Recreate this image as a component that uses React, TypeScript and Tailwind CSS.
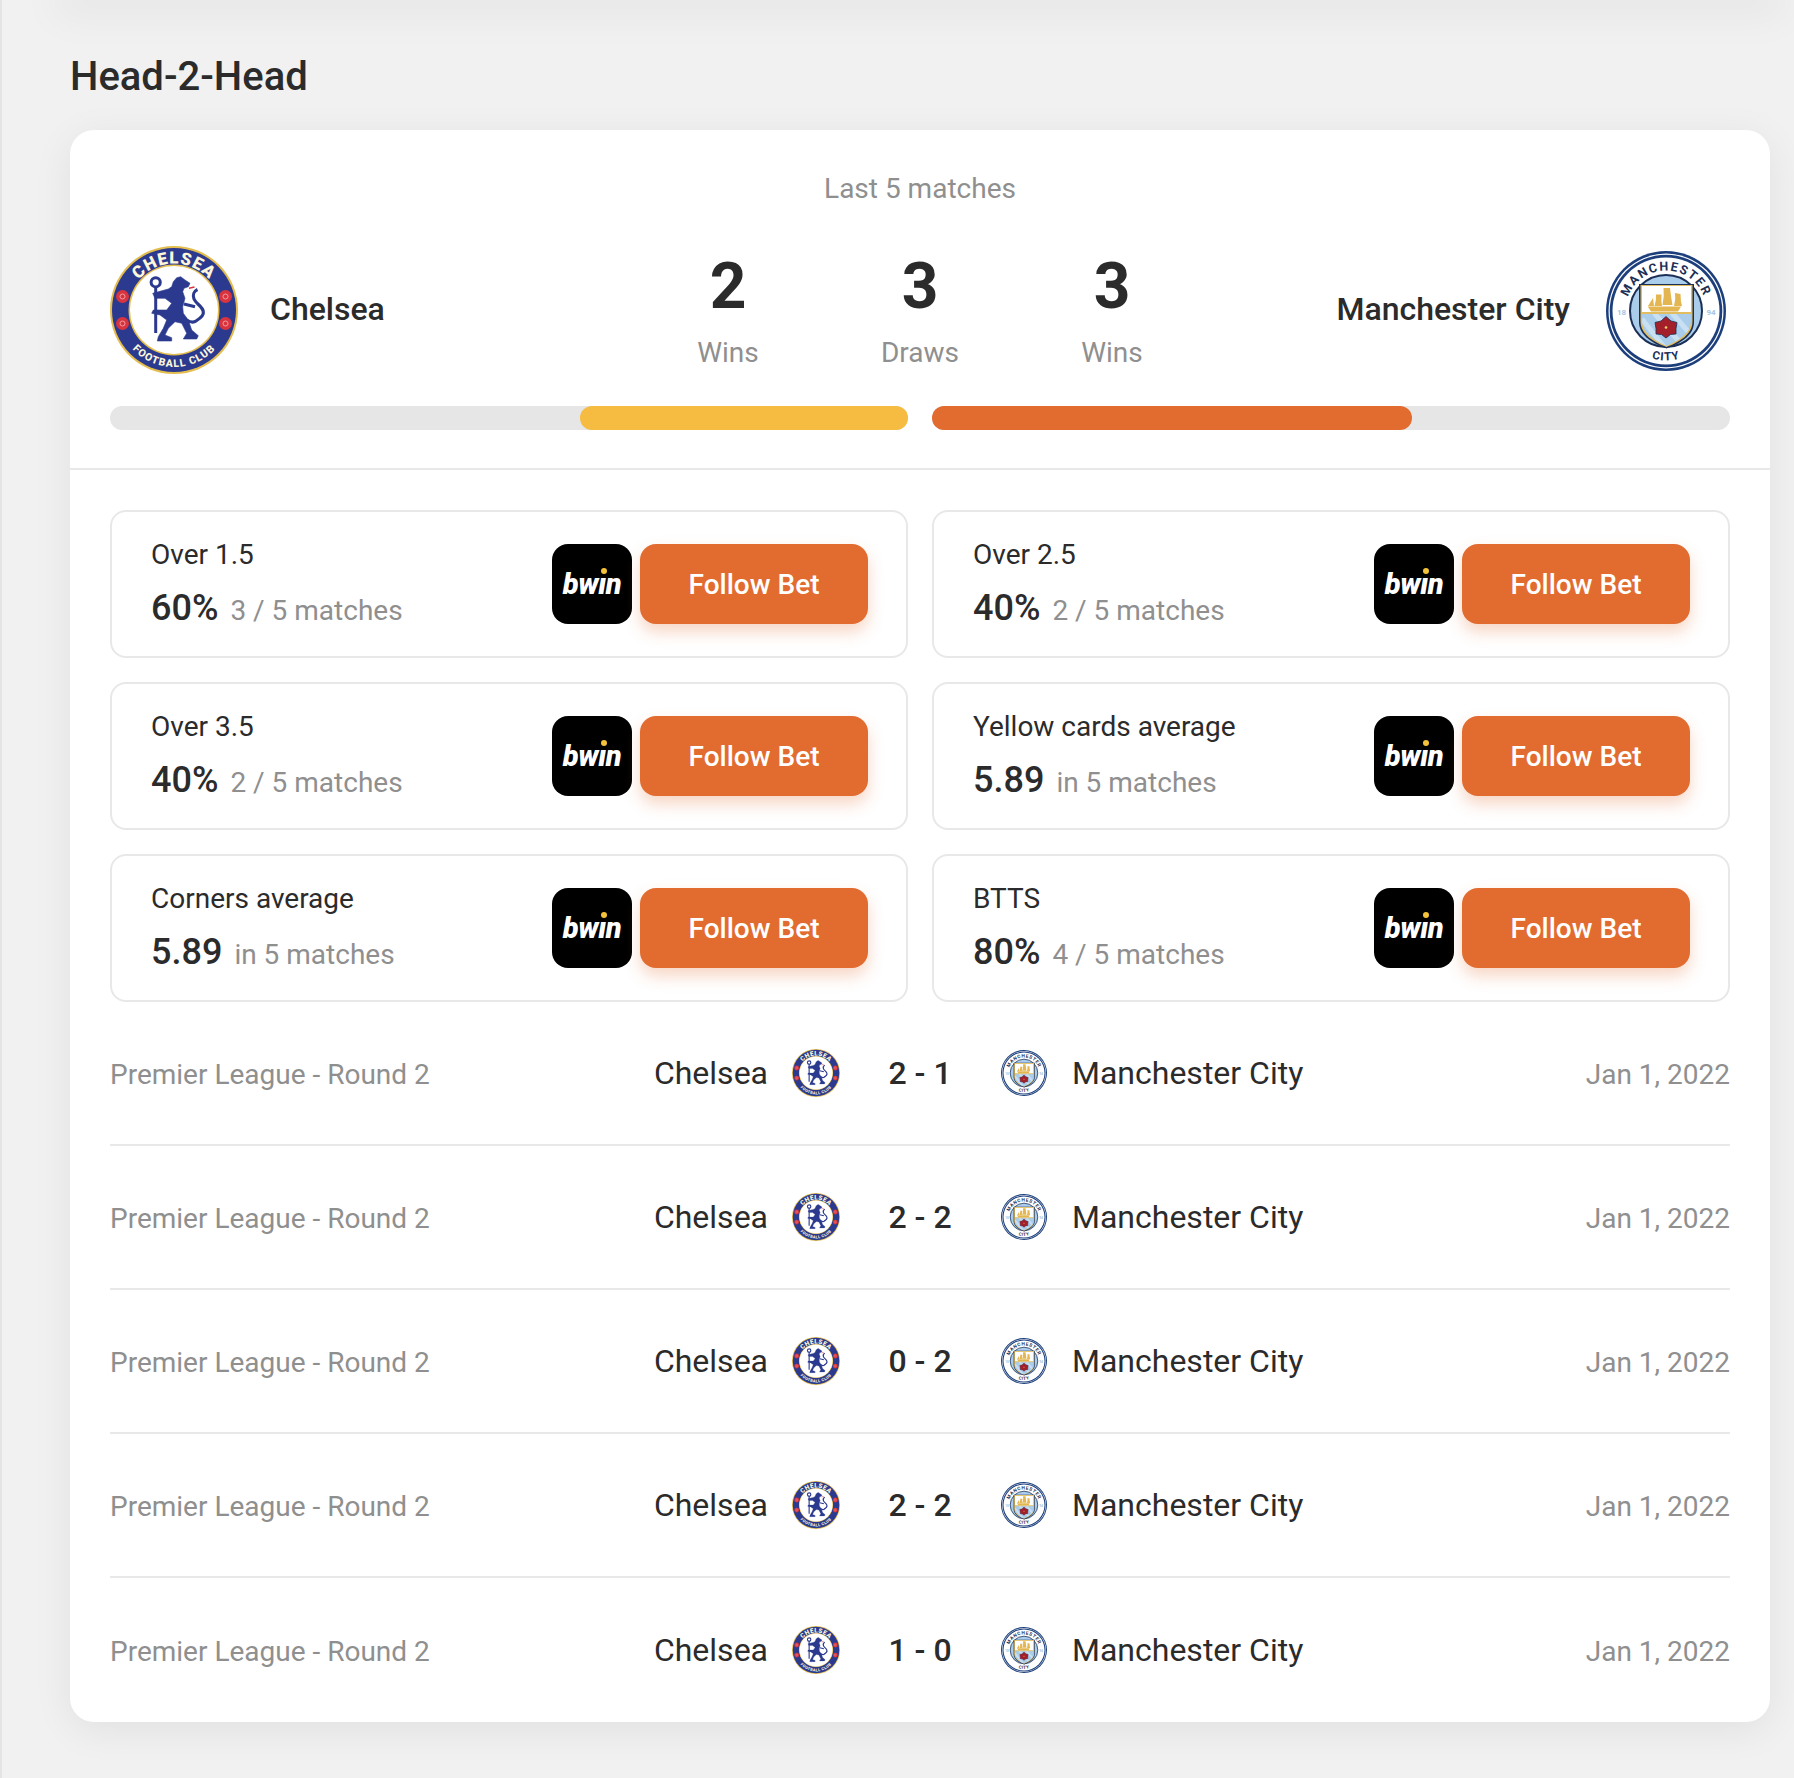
import React, { useId } from 'react';

const ChelseaCrest: React.FC<{ className?: string }> = ({ className }) => {
    const id = useId();
    return (
        <svg viewBox="0 0 128 128" className={className}>
            <defs>
                <path id={`${id}t`} d="M 17.5 64 A 46.5 46.5 0 0 1 110.5 64" />
                <path id={`${id}b`} d="M 7 64 A 57 57 0 0 0 121 64" />
            </defs>
            <circle cx="64" cy="64" r="64" fill="#e4bd4f" />
            <circle cx="64" cy="64" r="62" fill="#2b3a8e" />
            <circle cx="64" cy="64" r="45.5" fill="#e4bd4f" />
            <circle cx="64" cy="64" r="44" fill="#fff" />
            <text fill="#fdf6da" fontFamily="Roboto, sans-serif" fontWeight="900" fontSize="17" letterSpacing="1" textAnchor="middle">
                <textPath href={`#${id}t`} startOffset="50%">CHELSEA</textPath>
            </text>
            <text fill="#fdf6da" fontFamily="Roboto, sans-serif" fontWeight="800" fontSize="10.5" letterSpacing="1" textAnchor="middle">
                <textPath href={`#${id}b`} startOffset="50%">FOOTBALL CLUB</textPath>
            </text>
            {[[12.5, 50.5], [115.5, 50.5], [12.5, 77.5], [115.5, 77.5]].map(([x, y]) => (
                <g key={`${x}-${y}`}>
                    <circle cx={x} cy={y} r="6.5" fill="#d8343f" />
                    <circle cx={x} cy={y} r="2.5" fill="none" stroke="#f5b5b5" strokeWidth="0.8" />
                </g>
            ))}
            <g fill="#2b3a8e" stroke="#2b3a8e">
                <circle cx="45.7" cy="36.3" r="4.6" fill="none" strokeWidth="3" />
                <path d="M45.7 41V87" strokeWidth="3" fill="none" />
                <path
                    d="M63.3 35.7L66.7 31.7L70.7 30.7L75 34L80 37.3L78.3 40.7L74 42.3L72.7 45.7L75 52.3L72.7 60.7L73.3 67.3L78.3 74L81.7 84L88.3 89.7L86.7 93L73.3 93L76.7 87.3L71.7 77.3L65 75.7L58.3 82.3L55 89L61.7 91.7L61.7 95L47.3 95L48.3 90.7L53.3 82.3L56.7 74L50 69L41.7 67.3L43.3 64L56.7 64L61.7 57.3L55 52.3L45 52.3L42.7 47.3L58.3 43L61.7 40.7Z"
                    strokeWidth="0.6"
                />
                <path d="M76.7 74C80 76 84 76.5 86 75C91 72 94 69 93.3 65.7C92.5 60 86 58 84 53C82.5 49 84 45 87.5 43.5" strokeWidth="3.2" fill="none" />
                <path d="M74 58L85 60.7" strokeWidth="3" fill="none" />
            </g>
            <path d="M79 42.3L84.5 41" stroke="#d8343f" strokeWidth="1.4" />
        </svg>
    );
};

const CityCrest: React.FC<{ className?: string }> = ({ className }) => {
    const id = useId();
    return (
        <svg viewBox="0 0 120 120" className={className}>
            <defs>
                <path id={`${id}t`} d="M 19.5 60 A 40.5 40.5 0 0 1 100.5 60" />
                <path id={`${id}b`} d="M 10.5 60 A 49.5 49.5 0 0 0 109.5 60" />
                <clipPath id={`${id}s`}>
                    <path d="M36 35H85V70C85 83 71 90 60.5 95C50 90 36 83 36 70Z" />
                </clipPath>
            </defs>
            <circle cx="60" cy="60" r="60" fill="#1c3f7c" />
            <circle cx="60" cy="60" r="57.5" fill="#fff" />
            <circle cx="60" cy="60" r="56.3" fill="#1c3f7c" />
            <circle cx="60" cy="60" r="53.5" fill="#fff" />
            <text fill="#1b2f57" fontFamily="Roboto, sans-serif" fontWeight="700" fontSize="12.5" letterSpacing="1.6" textAnchor="middle">
                <textPath href={`#${id}t`} startOffset="50%">MANCHESTER</textPath>
            </text>
            <text fill="#1b2f57" fontFamily="Roboto, sans-serif" fontWeight="700" fontSize="11.5" letterSpacing="1" textAnchor="middle">
                <textPath href={`#${id}b`} startOffset="50%">CITY</textPath>
            </text>
            <text x="15.5" y="64" fill="#a9c5e2" fontFamily="Roboto, sans-serif" fontWeight="700" fontSize="8" textAnchor="middle">18</text>
            <text x="105" y="64" fill="#a9c5e2" fontFamily="Roboto, sans-serif" fontWeight="700" fontSize="8" textAnchor="middle">94</text>
            <circle cx="60" cy="60" r="36" fill="#a9cdea" stroke="#1b2f57" strokeWidth="2" />
            <path d="M33 33H88V71C88 85 73 93 60.5 97.5C48 93 33 85 33 71Z" fill="#1b2f57" />
            <path d="M34.5 34H86.5V70.5C86.5 84 72 91.5 60.5 96C49 91.5 34.5 84 34.5 70.5Z" fill="#e2bd5f" />
            <g clipPath={`url(#${id}s)`}>
                <rect x="36" y="35" width="49" height="27" fill="#fff" />
                <rect x="36" y="62" width="49" height="34" fill="#a9cdea" />
                <path d="M36 68L58 96M48 62L78 96M66 62L92 92" stroke="#c9e0f2" strokeWidth="5" />
                <rect x="36" y="61" width="49" height="2" fill="#e2bd5f" />
            </g>
            <g fill="#e3b651">
                <path d="M41.7 55.5H75L72 60.5H45Z" />
                <path d="M42 55L47 47L48 55Z" />
                <path d="M48.5 55Q50.5 49 50 43.5L55.5 43.5Q55 50 56 55Z" />
                <path d="M56.5 54Q58.5 45 57.5 37L64 37Q65 46 66.5 54Z" />
                <path d="M68 55Q70 48 69 42L74.5 43Q74.5 50 76 55Z" />
            </g>
            <path d="M60 65.5L65 70L71 71.5L70 77.5L70 83L64.5 83.5L60 87L55.5 83.5L50 83L50 77.5L49 71.5L55 70Z" fill="#a3202b" stroke="#1b2f57" strokeWidth="0.8" />
            <circle cx="60" cy="76.5" r="1.3" fill="#f2d36a" />
        </svg>
    );
};

const BwinLogo: React.FC = () => (
    <div className="w-20 h-20 shrink-0 rounded-2xl bg-black flex items-center justify-center">
        <span className="mt-[1px] text-[29px] leading-none font-black italic text-white tracking-[-0.4px]">
            bw
            <span className="relative">
                ı
                <span className="absolute top-[1px] left-[3px] w-[6px] h-[6px] rounded-full bg-[#f5c33b]" />
            </span>
            n
        </span>
    </div>
);

interface BetProps {
    label: string;
    value: string;
    note: string;
}

const BetCard: React.FC<BetProps> = ({ label, value, note }) => (
    <div className="h-[148px] rounded-2xl border-2 border-[#e8e8e8] pl-[39px] pr-[38px] flex items-center justify-between">
        <div className="pt-[1px]">
            <div className="text-[28px] leading-8 text-[#2b2b2b]">{label}</div>
            <div className="mt-[14px] flex items-baseline gap-3">
                <span className="text-[36px] leading-[46px] font-medium text-[#2b2b2b]">{value}</span>
                <span className="text-[28px] leading-[36px] text-[#8f8f8f]">{note}</span>
            </div>
        </div>
        <div className="flex items-center gap-2">
            <BwinLogo />
            <button className="w-[228px] h-20 pt-[2px] rounded-2xl bg-[#e26b2f] text-white text-[28px] font-medium shadow-[0_8px_16px_rgba(226,107,47,0.28)]">
                Follow Bet
            </button>
        </div>
    </div>
);

const bets: BetProps[] = [
    { label: 'Over 1.5', value: '60%', note: '3 / 5 matches' },
    { label: 'Over 2.5', value: '40%', note: '2 / 5 matches' },
    { label: 'Over 3.5', value: '40%', note: '2 / 5 matches' },
    { label: 'Yellow cards average', value: '5.89', note: 'in 5 matches' },
    { label: 'Corners average', value: '5.89', note: 'in 5 matches' },
    { label: 'BTTS', value: '80%', note: '4 / 5 matches' },
];

const scores = ['2 - 1', '2 - 2', '0 - 2', '2 - 2', '1 - 0'];

const Stat: React.FC<{ value: string; label: string }> = ({ value, label }) => (
    <div className="w-48 text-center">
        <div className="text-[64px] leading-[66px] font-bold text-[#2b2b2b]">{value}</div>
        <div className="mt-[15px] text-[28px] leading-9 text-[#8f8f8f]">{label}</div>
    </div>
);

const App: React.FC = () => {
    return (
        <div className="font-[Roboto,sans-serif] w-full h-[1778px] bg-[#f1f1f1] border-l-2 border-[#e4e4e4] pl-[68px] pr-6">
            <div className="h-0 shadow-[0_0_40px_16px_rgba(0,0,0,0.05)]" />
            <h2 className="pt-[53px] pb-[29px] text-[40px] leading-[48px] font-medium text-[#2b2b2b]">Head-2-Head</h2>
            <div className="bg-white rounded-3xl shadow-[0_8px_40px_rgba(0,0,0,0.07)]">
                <div className="px-10 pt-[43px] pb-[38px] border-b-2 border-[#e8e8e8]">
                    <div className="text-center text-[28px] leading-8 text-[#8f8f8f]">Last 5 matches</div>
                    <div className="mt-[41px] grid grid-cols-[1fr_576px_1fr] items-center">
                        <div className="flex items-center gap-8">
                            <ChelseaCrest className="w-32 h-32" />
                            <span className="pb-[2px] text-[32px] font-medium text-[#2b2b2b]">Chelsea</span>
                        </div>
                        <div className="flex mt-1">
                            <Stat value="2" label="Wins" />
                            <Stat value="3" label="Draws" />
                            <Stat value="3" label="Wins" />
                        </div>
                        <div className="flex items-center justify-end gap-8">
                            <span className="pb-[2px] text-[32px] font-medium text-[#2b2b2b]">Manchester City</span>
                            <div className="w-32 h-32 pt-[2px] flex items-center justify-center">
                                <CityCrest className="w-[120px] h-[120px]" />
                            </div>
                        </div>
                    </div>
                    <div className="mt-8 grid grid-cols-2 gap-6">
                        <div className="h-6 rounded-full bg-[#e6e6e6] flex justify-end">
                            <div className="h-full w-[328px] rounded-full bg-[#f5bc41]" />
                        </div>
                        <div className="h-6 rounded-full bg-[#e6e6e6]">
                            <div className="h-full w-[480px] rounded-full bg-[#e26b2f]" />
                        </div>
                    </div>
                </div>
                <div className="px-10 pt-10">
                    <div className="grid grid-cols-2 gap-6">
                        {bets.map((bet) => (
                            <BetCard key={bet.label} {...bet} />
                        ))}
                    </div>
                    <div>
                        {scores.map((score, i) => (
                            <div
                                key={i}
                                className={`h-[144px] grid grid-cols-[1fr_160px_1fr] items-center ${i < 4 ? 'border-b-2 border-[#e8e8e8]' : ''}`}
                            >
                                <div className="flex items-center justify-between">
                                    <span className="mt-[4px] text-[28px] text-[#8f8f8f]">Premier League - Round 2</span>
                                    <div className="flex items-center gap-6">
                                        <span className="text-[32px] text-[#2b2b2b]">Chelsea</span>
                                        <ChelseaCrest className="w-12 h-12" />
                                    </div>
                                </div>
                                <div className="text-center text-[32px] font-medium text-[#2b2b2b]">{score}</div>
                                <div className="flex items-center justify-between">
                                    <div className="flex items-center gap-6">
                                        <CityCrest className="mx-[1px] w-[46px] h-[46px]" />
                                        <span className="text-[32px] text-[#2b2b2b]">Manchester City</span>
                                    </div>
                                    <span className="mt-[4px] text-[28px] text-[#8f8f8f]">Jan 1, 2022</span>
                                </div>
                            </div>
                        ))}
                    </div>
                </div>
            </div>
        </div>
    );
};

export default App;
